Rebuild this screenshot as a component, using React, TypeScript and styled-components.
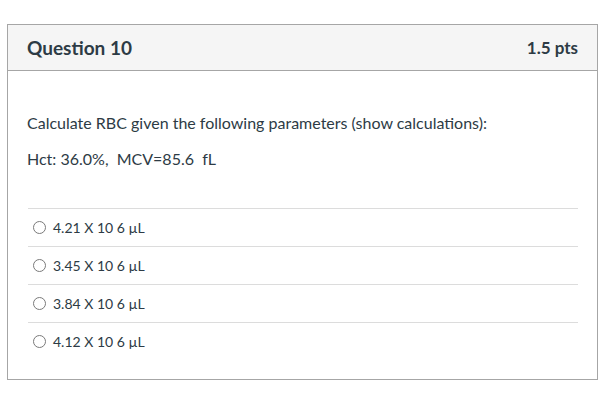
import React from "react";
import styled, { createGlobalStyle } from "styled-components";

const Global = createGlobalStyle`
  html, body { margin: 0; padding: 0; background: #fff; }
  body { font-family: Lato, "Open Sans", sans-serif; color: #2d3b45; }
`;

const Page = styled.div`
  padding: 24px 10px 0 7px;
`;

const Card = styled.div`
  width: 591px;
  box-sizing: border-box;
  border: 1px solid #a6a6a6;
  background: #fff;
`;

const Header = styled.div`
  display: flex;
  align-items: center;
  justify-content: space-between;
  height: 46px;
  box-sizing: border-box;
  padding: 0 19px 0 19px;
  background: #f5f5f5;
  border-bottom: 1px solid #a6a6a6;
`;

const Title = styled.div`
  font-size: 19px;
  font-weight: 700;
  color: #2d3b45;
`;

const Points = styled.div`
  font-size: 17px;
  font-weight: 700;
  color: #2d3b45;
`;

const Body = styled.div`
  padding: 40px 19px 19px 19px;
`;

const Para = styled.p`
  margin: 0 0 12px 0;
  font-size: 16px;
  line-height: 24px;
  color: #2d3b45;
`;

const Answers = styled.div`
  margin-top: 37px;
  padding-left: 1px;
`;

const Row = styled.label`
  display: flex;
  align-items: center;
  height: 38px;
  box-sizing: border-box;
  border-top: 1px solid #dcdcdc;
  padding-left: 5px;
  font-size: 14px;
  color: #2d3b45;
`;

const Radio = styled.span`
  width: 11px;
  height: 11px;
  border: 1px solid #7a7a7a;
  border-radius: 50%;
  margin-right: 7px;
  flex: none;
`;

const answers = [
  "4.21 X 10 6 µL",
  "3.45 X 10 6 µL",
  "3.84 X 10 6 µL",
  "4.12 X 10 6 µL",
];

export default function App() {
  return (
    <>
      <Global />
      <Page>
        <Card>
          <Header>
            <Title>Question 10</Title>
            <Points>1.5 pts</Points>
          </Header>
          <Body>
            <Para>Calculate RBC given the following parameters (show calculations):</Para>
            <Para>Hct: 36.0%,&nbsp; MCV=85.6&nbsp; fL</Para>
            <Answers>
              {answers.map((a) => (
                <Row key={a}>
                  <Radio />
                  {a}
                </Row>
              ))}
            </Answers>
          </Body>
        </Card>
      </Page>
    </>
  );
}
